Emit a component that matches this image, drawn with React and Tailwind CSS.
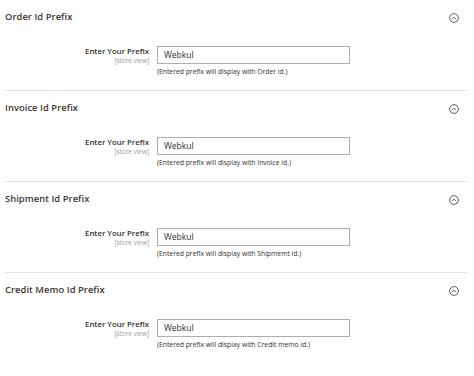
const sections = [
  { title: 'Order Id Prefix', note: 'Order id.' },
  { title: 'Invoice Id Prefix', note: 'Invoice id.' },
  { title: 'Shipment Id Prefix', note: 'Shipmemt id.' },
  { title: 'Credit Memo Id Prefix', note: 'Credit memo id.' },
];

const CollapseIcon = () => (
  <svg width="10" height="10" viewBox="0 0 10 10" fill="none">
    <circle cx="5" cy="5" r="4.4" stroke="#514943" strokeWidth="0.9" />
    <path d="M3.2 5.9 L5 4.1 L6.8 5.9" stroke="#514943" strokeWidth="0.9" strokeLinecap="round" strokeLinejoin="round" />
  </svg>
);

const PrefixSection = ({ title, note, last }) => (
  <div className={`h-[91px] ${last ? '' : 'border-b border-[#e3e3e3]'}`}>
    <div className="h-[35px] flex items-center justify-between pr-[8px]">
      <h2 className="text-[9.4px] font-semibold text-[#41362f] tracking-[0.05px]">{title}</h2>
      <CollapseIcon />
    </div>
    <div className="flex mt-[11px]">
      <div className="w-[144px] text-right">
        <div className="text-[7.8px] leading-[11px] font-semibold text-[#303030]">Enter Your Prefix</div>
        <div className="text-[6.4px] leading-[7px] text-[#9a9a9a]">[store view]</div>
      </div>
      <div className="ml-[8px]">
        <div className="w-[193px] h-[18px] border border-[#adadad] bg-white flex items-center px-[6px] text-[8.5px] text-[#303030]">
          Webkul
        </div>
        <div className="mt-[3px] text-[6.8px] leading-[10px] text-[#303030]">
          (Entered prefix will display with {note})
        </div>
      </div>
    </div>
  </div>
);

export default function App() {
  return (
    <div className="w-[474px] h-[376px] bg-white overflow-hidden font-['Open_Sans',sans-serif]">
      <div className="ml-[5px] w-[462px]">
        {sections.map((s, i) => (
          <PrefixSection key={s.title} title={s.title} note={s.note} last={i === sections.length - 1} />
        ))}
      </div>
    </div>
  );
}
